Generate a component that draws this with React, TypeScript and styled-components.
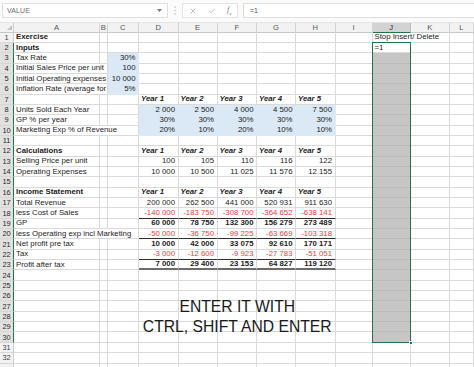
import React from 'react';
import styled, { createGlobalStyle } from 'styled-components';
import { X, Check } from 'lucide-react';

const GlobalStyle = createGlobalStyle`
  html, body { margin: 0; padding: 0; background: #ffffff; }
  body { font-family: 'Liberation Sans', Arial, sans-serif; overflow: hidden; }
  *, *::before, *::after { box-sizing: border-box; }
`;

const ROW_H = 10.35;
const NROWS = 33;
const LETTERS = ['A', 'B', 'C', 'D', 'E', 'F', 'G', 'H', 'I', 'J', 'K', 'L'];
const GREEN = '#217346';
const GRID = '#dadada';
const BLUE = '#dbe8f5';
const RED = '#ef3b3b';
const SEL = '#c6c6c6';

/* ---------- formula bar ---------- */
const FormulaBar = styled.div`
  height: 22.5px;
  display: flex;
  align-items: center;
  padding: 0 0 0 2px;
  background: #fbfbfb;
  border-bottom: 1px solid #e4e4e4;
`;

const NameBox = styled.div`
  width: 166px;
  height: 15px;
  display: flex;
  align-items: center;
  justify-content: space-between;
  padding: 0 5px 0 4px;
  background: #fff;
  border: 1px solid #dedede;
  font-size: 7px;
  color: #6a6a6a;
  letter-spacing: 0.1px;
`;

const Separator = styled.div`
  width: 14px;
  display: flex;
  justify-content: center;
`;

const ButtonsBox = styled.div`
  width: 56px;
  height: 15px;
  display: flex;
  align-items: center;
  gap: 11px;
  padding-left: 6px;
  background: #fff;
  border: 1px solid #e4e4e4;
  color: #7a7a7a;
`;

const Fx = styled.span`
  width: 8px;
  font-family: 'Liberation Serif', 'Times New Roman', serif;
  font-style: italic;
  font-size: 8px;
  color: #7a7a7a;
  sub { font-size: 5px; }
`;

const FormulaInput = styled.div`
  flex: 1;
  height: 15px;
  margin-left: 5px;
  display: flex;
  align-items: center;
  padding-left: 6px;
  background: #fff;
  border: 1px solid #dedede;
  border-right: none;
  font-size: 7px;
  color: #555;
`;

/* ---------- sheet ---------- */
const Sheet = styled.div`
  display: grid;
  grid-template-columns: 14px 86px 7.5px 31.5px 39.5px 39px 39.5px 39px 39.5px 37px 38.5px 38.5px 1fr;
  grid-template-rows: 10px repeat(${NROWS}, ${ROW_H}px);
  font-size: 7.8px;
  color: #1c1c1c;
`;

const Corner = styled.div`
  grid-row: 1;
  grid-column: 1;
  background: #f2f2f2;
  border-right: 1px solid #cfcfcf;
  border-bottom: 1px solid #c8c8c8;
  display: flex;
  align-items: flex-end;
  justify-content: flex-end;
  padding: 0 1.5px 1.5px 0;
`;

const ColHead = styled.div<{ $col: number; $sel?: boolean }>`
  grid-row: 1;
  grid-column: ${(p) => p.$col};
  display: flex;
  align-items: center;
  justify-content: center;
  background: ${(p) => (p.$sel ? '#d3d3d3' : '#f2f2f2')};
  border-right: 1px solid ${(p) => (p.$sel ? '#bcbcbc' : '#d4d4d4')};
  border-bottom: ${(p) => (p.$sel ? `1.5px solid ${GREEN}` : '1px solid #c8c8c8')};
  font-size: 7.6px;
  color: ${(p) => (p.$sel ? '#2a2a2a' : '#555')};
`;

const RowHead = styled.div<{ $row: number; $sel?: boolean }>`
  grid-row: ${(p) => p.$row};
  grid-column: 1;
  display: flex;
  align-items: center;
  justify-content: center;
  background: ${(p) => (p.$sel ? '#e1e1e1' : '#f2f2f2')};
  border-right: ${(p) => (p.$sel ? `1.5px solid ${GREEN}` : '1px solid #cfcfcf')};
  border-bottom: 1px solid #d6d6d6;
  font-size: 7.4px;
  color: ${(p) => (p.$sel ? '#2b2b2b' : '#444')};
`;

type Below = 'none' | 'thin' | 'double';

const Cell = styled.div<{
  $row: number;
  $col: number;
  $span?: number;
  $right?: boolean;
  $bold?: boolean;
  $italic?: boolean;
  $color?: string;
  $bg?: string;
  $line?: string;
  $below?: Below;
}>`
  grid-row: ${(p) => p.$row};
  grid-column: ${(p) => p.$col} / span ${(p) => p.$span ?? 1};
  display: flex;
  align-items: center;
  justify-content: ${(p) => (p.$right ? 'flex-end' : 'flex-start')};
  padding: 0 ${(p) => (p.$right ? 2.5 : 0.5)}px 0 2px;
  white-space: nowrap;
  overflow: hidden;
  line-height: 1;
  background: ${(p) => p.$bg ?? 'transparent'};
  border-right: 1px solid ${(p) => p.$line ?? GRID};
  border-bottom: ${(p) =>
    p.$below === 'thin'
      ? '1px solid #2e2e2e'
      : p.$below === 'double'
      ? '2px solid #6c6c6c'
      : `1px solid ${p.$line ?? GRID}`};
  font-weight: ${(p) => (p.$bold ? 700 : 400)};
  font-style: ${(p) => (p.$italic ? 'italic' : 'normal')};
  color: ${(p) => p.$color ?? '#1c1c1c'};
`;

const Selection = styled.div`
  grid-column: 11;
  grid-row: 3 / 32;
  position: relative;
  border: 1.5px solid ${GREEN};
  margin: -0.5px 0 0 -0.5px;
  pointer-events: none;
  z-index: 2;
`;

const FillHandle = styled.div`
  position: absolute;
  right: -3px;
  bottom: -3px;
  width: 4px;
  height: 4px;
  background: ${GREEN};
  border: 1px solid #fff;
`;

const Note = styled.div`
  grid-column: 5 / 10;
  grid-row: 27 / 32;
  align-self: center;
  z-index: 1;
  text-align: center;
  font-size: 15.7px;
  line-height: 20px;
  color: #1a1a1a;
  white-space: nowrap;
  padding-top: 1px;
`;

/* ---------- data ---------- */
type Kind = 'plain' | 'bold' | 'red' | 'year';
interface RowData {
  a?: string;
  aBold?: boolean;
  aSpan?: number;
  c?: string;
  vals?: string[];
  kind?: Kind;
  fill?: boolean;
  below?: Below;
}

const YEARS = ['Year 1', 'Year 2', 'Year 3', 'Year 4', 'Year 5'];

const DATA: Record<number, RowData> = {
  1: { a: 'Exercise', aBold: true },
  2: { a: 'Inputs', aBold: true },
  3: { a: 'Tax Rate', c: '30%' },
  4: { a: 'Initial Sales Price per unit', aSpan: 2, c: '100' },
  5: { a: 'Initial Operating expenses', aSpan: 2, c: '10 000' },
  6: { a: 'Inflation Rate (average for', aSpan: 2, c: '5%' },
  7: { vals: YEARS, kind: 'year' },
  8: { a: 'Units Sold Each Year', vals: ['2 000', '2 500', '4 000', '4 500', '7 500'], fill: true },
  9: { a: 'GP % per year', vals: ['30%', '30%', '30%', '30%', '30%'], fill: true },
  10: { a: 'Marketing Exp % of Revenue', aSpan: 3, vals: ['20%', '10%', '20%', '10%', '10%'], fill: true },
  12: { a: 'Calculations', aBold: true, vals: YEARS, kind: 'year' },
  13: { a: 'Selling Price per unit', vals: ['100', '105', '110', '116', '122'] },
  14: { a: 'Operating Expenses', vals: ['10 000', '10 500', '11 025', '11 576', '12 155'] },
  16: { a: 'Income Statement', aBold: true, vals: YEARS, kind: 'year' },
  17: { a: 'Total Revenue', vals: ['200 000', '262 500', '441 000', '520 931', '911 630'] },
  18: { a: 'less Cost of Sales', vals: ['-140 000', '-183 750', '-308 700', '-364 652', '-638 141'], kind: 'red', below: 'thin' },
  19: { a: 'GP', vals: ['60 000', '78 750', '132 300', '156 279', '273 489'], kind: 'bold' },
  20: { a: 'less Operating exp incl Marketing', aSpan: 3, vals: ['-50 000', '-36 750', '-99 225', '-63 669', '-103 318'], kind: 'red', below: 'thin' },
  21: { a: 'Net profit pre tax', vals: ['10 000', '42 000', '33 075', '92 610', '170 171'], kind: 'bold' },
  22: { a: 'Tax', vals: ['-3 000', '-12 600', '-9 923', '-27 783', '-51 051'], kind: 'red', below: 'thin' },
  23: { a: 'Profit after tax', vals: ['7 000', '29 400', '23 153', '64 827', '119 120'], kind: 'bold', below: 'double' },
};

const Corner3 = () => (
  <svg width="5" height="5" viewBox="0 0 5 5">
    <polygon points="5,0 5,5 0,5" fill="#c4c4c4" />
  </svg>
);

function renderRow(r: number) {
  const g = r + 1; // grid row line
  const d = DATA[r] ?? {};
  const out: React.ReactNode[] = [];
  const selRow = r >= 2 && r <= 30;
  out.push(
    <RowHead key={`h${r}`} $row={g} $sel={selRow}>
      {r <= 32 ? r : ''}
    </RowHead>
  );

  // column A (grid col 2)
  const aSpan = d.aSpan ?? 1;
  out.push(
    <Cell key={`a${r}`} $row={g} $col={2} $span={aSpan} $bold={d.aBold}>
      {d.a ?? ''}
    </Cell>
  );
  if (aSpan < 2) out.push(<Cell key={`b${r}`} $row={g} $col={3} />);
  if (aSpan < 3)
    out.push(
      <Cell key={`c${r}`} $row={g} $col={4} $right $bg={d.c ? BLUE : undefined} $line={d.c ? BLUE : undefined}>
        {d.c ?? ''}
      </Cell>
    );

  // D..H (grid cols 5..9)
  for (let i = 0; i < 5; i++) {
    const v = d.vals?.[i];
    const kind = d.kind ?? 'plain';
    out.push(
      <Cell
        key={`v${r}-${i}`}
        $row={g}
        $col={5 + i}
        $right={kind !== 'year'}
        $bold={kind === 'bold' || kind === 'year'}
        $italic={kind === 'year'}
        $color={kind === 'red' ? RED : undefined}
        $bg={d.fill ? BLUE : undefined}
        $line={d.fill ? BLUE : undefined}
        $below={d.below}
      >
        {v ?? ''}
      </Cell>
    );
  }

  // I
  out.push(<Cell key={`i${r}`} $row={g} $col={10} />);

  // J (grid col 11), K (12), L (13)
  if (r === 1) {
    out.push(
      <Cell key={`j${r}`} $row={g} $col={11} $span={2}>
        Stop Insert/ Delete
      </Cell>
    );
  } else {
    const grey = r >= 3 && r <= 30;
    out.push(
      <Cell key={`j${r}`} $row={g} $col={11} $bg={grey ? SEL : undefined} $line={grey ? '#bdbdbd' : undefined}>
        {r === 2 ? '=1' : ''}
      </Cell>
    );
    out.push(<Cell key={`k${r}`} $row={g} $col={12} />);
  }
  out.push(<Cell key={`l${r}`} $row={g} $col={13} />);
  return out;
}

export default function App() {
  const rows: number[] = [];
  for (let r = 1; r <= NROWS; r++) rows.push(r);
  return (
    <>
      <GlobalStyle />
      <FormulaBar>
        <NameBox>
          <span>VALUE</span>
          <svg width="5" height="3" viewBox="0 0 5 3">
            <polygon points="0,0 5,0 2.5,3" fill="#777" />
          </svg>
        </NameBox>
        <Separator>
          <svg width="2" height="9" viewBox="0 0 2 9">
            <circle cx="1" cy="1" r="0.7" fill="#b5b5b5" />
            <circle cx="1" cy="4.5" r="0.7" fill="#b5b5b5" />
            <circle cx="1" cy="8" r="0.7" fill="#b5b5b5" />
          </svg>
        </Separator>
        <ButtonsBox>
          <X size={8} strokeWidth={1.4} />
          <Check size={8} strokeWidth={1.4} />
          <Fx>
            f<sub>x</sub>
          </Fx>
        </ButtonsBox>
        <FormulaInput>=1</FormulaInput>
      </FormulaBar>
      <Sheet>
        <Corner>
          <Corner3 />
        </Corner>
        {LETTERS.map((l, i) => (
          <ColHead key={l} $col={i + 2} $sel={l === 'J'}>
            {l}
          </ColHead>
        ))}
        {rows.map((r) => renderRow(r))}
        <Selection>
          <FillHandle />
        </Selection>
        <Note>
          ENTER IT WITH
          <br />
          CTRL, SHIFT AND ENTER
        </Note>
      </Sheet>
    </>
  );
}
